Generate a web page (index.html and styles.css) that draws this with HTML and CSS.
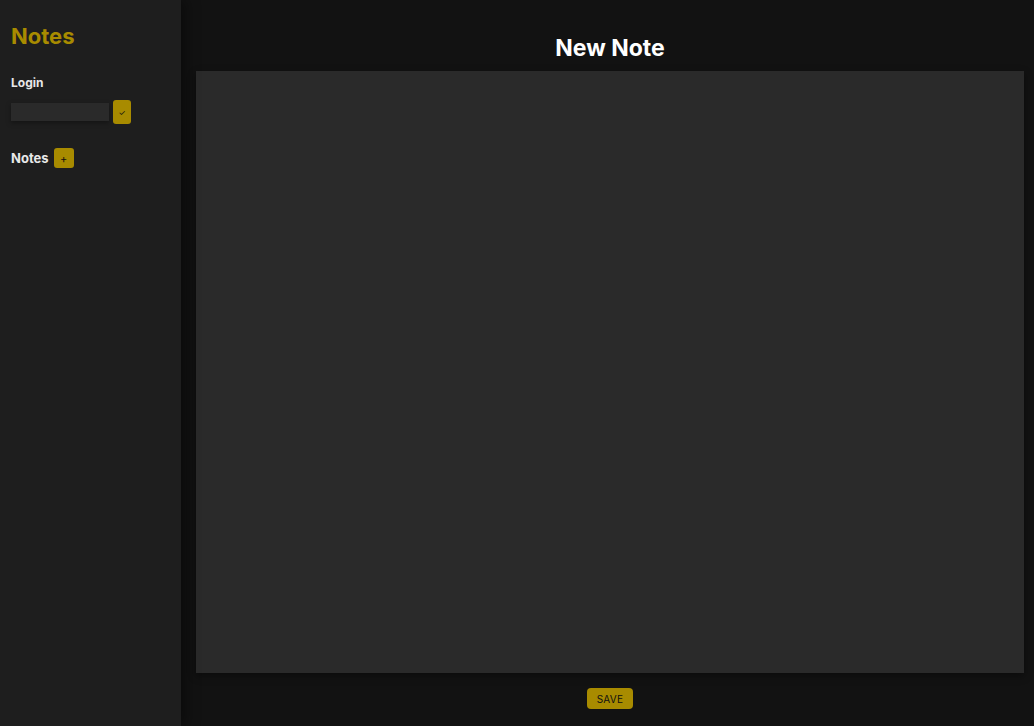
FILE: index.html
```html
<!DOCTYPE html>
<html lang="en">
<head>
<meta charset="utf-8">
<title>Notes</title>
<link rel="stylesheet" href="styles.css">
</head>
<body>
<div class="app">
  <aside class="sidebar">
    <h1 class="brand">Notes</h1>
    <h3 class="label">Login</h3>
    <div class="login-row">
      <input class="login-input" type="text">
      <button class="btn btn-check">✓</button>
    </div>
    <div class="notes-row">
      <h3 class="notes-label">Notes</h3>
      <button class="btn btn-plus">+</button>
    </div>
  </aside>
  <main class="main">
    <h1 class="title">New Note</h1>
    <textarea class="editor"></textarea>
    <div class="actions">
      <button class="btn btn-save">SAVE</button>
    </div>
  </main>
</div>
</body>
</html>
```
FILE: styles.css
```css
* { box-sizing: border-box; }
html, body { margin: 0; height: 100%; }
body {
  font-family: Inter, "Liberation Sans", sans-serif;
  background: #121212;
  color: #eeeeee;
  overflow: hidden;
}
.app {
  display: flex;
  height: 100vh;
}
.sidebar {
  width: 181px;
  flex: 0 0 181px;
  background: #1e1e1e;
  padding: 22px 11px 0 11px;
  box-shadow: 4px 0 14px rgba(0,0,0,0.45);
  position: relative;
  z-index: 2;
}
.brand {
  margin: 0;
  font-size: 22px;
  line-height: 29px;
  font-weight: 700;
  color: #a88b00;
}
.label {
  margin: 24px 0 0 0;
  font-size: 12px;
  line-height: 15px;
  font-weight: 700;
  color: #e8e8e8;
}
.login-row {
  display: flex;
  align-items: center;
  gap: 4px;
  margin-top: 10px;
}
.login-input {
  width: 98px;
  height: 18px;
  border: none;
  background: #2a2a2a;
  box-shadow: 0 2px 5px rgba(0,0,0,0.35);
  padding: 0 4px;
  color: #eee;
  outline: none;
}
.btn {
  border: none;
  background: #a88b00;
  color: #111;
  font-family: Inter, "Liberation Sans", sans-serif;
  padding: 0;
  cursor: pointer;
  display: inline-flex;
  align-items: center;
  justify-content: center;
}
.btn-check {
  width: 18px;
  height: 24px;
  border-radius: 3px;
  font-size: 8px;
  padding-top: 1px;
}
.notes-row {
  display: flex;
  align-items: center;
  gap: 5px;
  margin-top: 24px;
}
.notes-label {
  margin: 0;
  font-size: 13px;
  line-height: 16px;
  font-weight: 700;
  color: #e8e8e8;
}
.btn-plus {
  width: 20px;
  height: 20px;
  border-radius: 3px;
  font-size: 11px;
  padding-top: 2px;
}
.main {
  flex: 1;
  display: flex;
  flex-direction: column;
  padding: 34px 10px 17px 15px;
  min-width: 0;
}
.title {
  margin: 0 0 8px 0;
  font-size: 23px;
  line-height: 29px;
  font-weight: 700;
  text-align: center;
  color: #ffffff;
}
.editor {
  flex: 1;
  width: 100%;
  border: none;
  resize: none;
  background: #2a2a2a;
  box-shadow: 0 3px 8px rgba(0,0,0,0.4);
  outline: none;
  color: #eee;
  padding: 10px;
}
.actions {
  display: flex;
  justify-content: center;
  margin-top: 15px;
}
.btn-save {
  width: 46px;
  height: 21px;
  border-radius: 4px;
  font-size: 10px;
  letter-spacing: 0.3px;
}
```
